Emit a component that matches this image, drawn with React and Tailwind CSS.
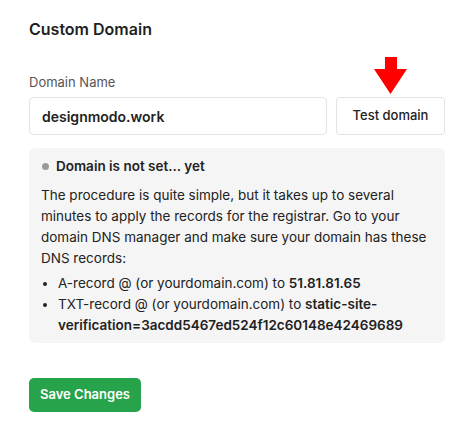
import React, { useState } from "react";

const App = () => {
  const [domain, setDomain] = useState("designmodo.work");

  return (
    <div
      className="min-h-screen bg-white px-[29px] pt-[18px] text-[#1f1f1f]"
      style={{ fontFamily: "Inter, 'Noto Sans', sans-serif" }}
    >
      <h2 className="text-[16px] font-semibold leading-[22px]">Custom Domain</h2>

      <label className="mt-[33px] block text-[13px] leading-[18px] text-[#555]">
        Domain Name
      </label>

      <div className="mt-[6px] flex w-[416px] gap-[9px]">
        <input
          type="text"
          value={domain}
          onChange={(e) => setDomain(e.target.value)}
          className="h-[38px] flex-1 rounded-[4px] border border-[#e3e3e3] px-[12px] text-[14px] font-semibold text-[#222] focus:outline-none"
        />
        <div className="relative">
          {/* red arrow pointing at the button */}
          <svg
            className="absolute left-[38px] top-[-40px]"
            width="33"
            height="37"
            viewBox="0 0 33 37"
          >
            <path d="M11 0 H23 V12 H33 L16.5 37 L0 12 H11 Z" fill="#ff0000" />
          </svg>
          <button
            type="button"
            className="h-[38px] w-[109px] rounded-[4px] border border-[#e3e3e3] bg-white text-[13px] font-medium text-[#222]"
          >
            Test domain
          </button>
        </div>
      </div>

      <div className="mt-[13px] w-[416px] rounded-[6px] bg-[#f5f5f5] px-[12px] pb-[7px] pt-[8px] text-[13.5px] leading-[21px] text-[#222]">
        <div className="flex items-center gap-[7px] font-semibold">
          <span className="ml-[1px] h-[7px] w-[7px] rounded-full bg-[#9a9a9a]" />
          Domain is not set... yet
        </div>
        <p className="mt-[8px]">
          The procedure is quite simple, but it takes up to several minutes to
          apply the records for the registrar. Go to your domain DNS manager and
          make sure your domain has these DNS records:
        </p>
        <ul className="mt-[4px] list-disc pl-[17px]">
          <li>
            A-record @ (or yourdomain.com) to{" "}
            <span className="font-semibold">51.81.81.65</span>
          </li>
          <li>
            TXT-record @ (or yourdomain.com) to{" "}
            <span className="font-semibold">
              static-site-verification=3acdd5467ed524f12c60148e42469689
            </span>
          </li>
        </ul>
      </div>

      <button
        type="button"
        className="mt-[35px] h-[34px] w-[112px] rounded-[5px] bg-[#26a34b] text-[13px] font-semibold text-white"
      >
        Save Changes
      </button>
    </div>
  );
};

export default App;
